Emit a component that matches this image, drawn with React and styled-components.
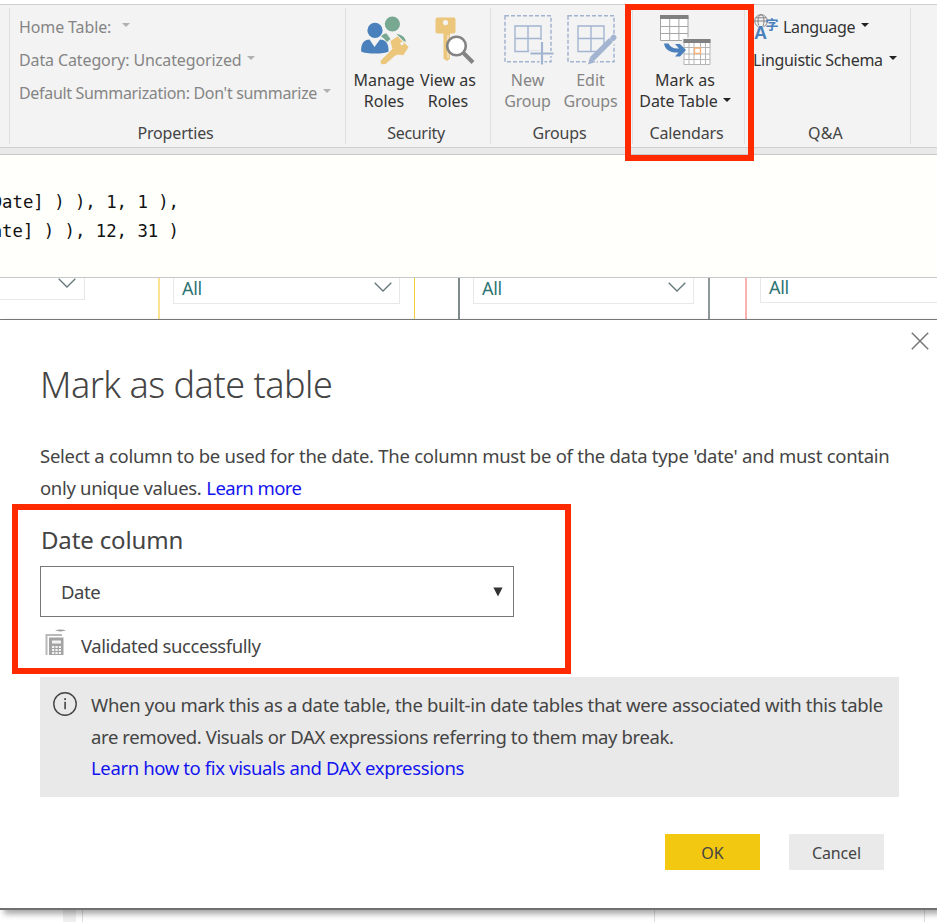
import React from 'react'
import styled, { createGlobalStyle } from 'styled-components'

const RED = "#ff2a00"
const LINE = "#d0d0d0"
const TEXT = "#444444"

const App = () => {
    return (
        <Page>
            <GlobalStyle />
            <Ribbon>
                <Group $width={336}>
                    <Options $muted>
                        <Option><Fit $track={-0.12}>Home Table:</Fit><Caret $gap={11} /></Option>
                        <Option><Fit $track={-0.12}>Data Category: Uncategorized</Fit><Caret $gap={5} /></Option>
                        <Option><Fit $track={-0.32}>Default Summarization: Don't summarize</Fit><Caret $gap={6} /></Option>
                    </Options>
                    <GroupLabel><Fit $track={-0.15}>Properties</Fit></GroupLabel>
                </Group>
                <Group $width={145}>
                    <Tools $indent={6}>
                        <Tool $width={64}>
                            <ManageRolesIcon />
                            <Fit>Manage</Fit>
                            <Fit>Roles</Fit>
                        </Tool>
                        <Tool $width={64}>
                            <ViewAsIcon />
                            <Fit>View as</Fit>
                            <Fit>Roles</Fit>
                        </Tool>
                    </Tools>
                    <GroupLabel><Fit $track={-0.3}>Security</Fit></GroupLabel>
                </Group>
                <Group $width={142}>
                    <Tools $indent={5}>
                        <Tool $width={63} $muted>
                            <NewGroupIcon />
                            <Fit>New</Fit>
                            <Fit $track={-0.15}>Group</Fit>
                        </Tool>
                        <Tool $width={63} $muted>
                            <EditGroupsIcon />
                            <Fit>Edit</Fit>
                            <Fit $track={-0.15}>Groups</Fit>
                        </Tool>
                    </Tools>
                    <GroupLabel><Fit $track={-0.15}>Groups</Fit></GroupLabel>
                </Group>
                <Group $width={112}>
                    <Tools $indent={4}>
                        <Tool $width={96}>
                            <DateTableIcon />
                            <Fit $track={0.1}>Mark as</Fit>
                            <ToolLine><Fit $track={-0.08}>Date Table</Fit><Caret $dark $gap={5} /></ToolLine>
                        </Tool>
                    </Tools>
                    <GroupLabel><Fit $track={-0.15}>Calendars</Fit></GroupLabel>
                </Group>
                <Group $width={167}>
                    <Options $tight>
                        <Option><LanguageIcon /><Fit $track={-0.33}>Language</Fit><Caret $dark $gap={6} /></Option>
                        <Option><Fit $track={-0.31}>Linguistic Schema</Fit><Caret $dark $gap={6} /></Option>
                    </Options>
                    <GroupLabel><Fit $track={0.2}>Q&amp;A</Fit></GroupLabel>
                </Group>
            </Ribbon>
            <RibbonEdge />
            <Formula>
                <CodeLine>Date] ) ), 1, 1 ),</CodeLine>
                <CodeLine>Date] ) ), 12, 31 )</CodeLine>
            </Formula>
            <Slicers>
                <Slicer $width={85} $height={22}><Chevron $raised /></Slicer>
                <SlicerCard $width={257} $left="#fbe391" $right="#f2ce3e" $gap={73}>
                    <Slicer $width={227} $height={26} $boxed><Fit $track={-0.3}>All</Fit><Chevron /></Slicer>
                </SlicerCard>
                <SlicerCard $width={252} $left="#7f8a8c" $right="#8e979a" $thick $gap={43}>
                    <Slicer $width={221} $height={26} $boxed><Fit $track={-0.3}>All</Fit><Chevron /></Slicer>
                </SlicerCard>
                <SlicerCard $width={258} $left="#fcb1b1" $gap={35}>
                    <Slicer $width={227} $height={25} $boxed $raised><Fit $track={-0.3}>All</Fit><Chevron /></Slicer>
                </SlicerCard>
            </Slicers>
            <Dialog>
                <Close viewBox="0 0 18 18"><path d="M.8.8 17.2 17.2M17.2.8.8 17.2" /></Close>
                <Title><Fit $track={-0.5}>Mark as date table</Fit></Title>
                <Paragraph>
                    <Fit $track={-0.27}>Select a column to be used for the date. The column must be of the data type 'date' and must contain</Fit><br />
                    <Fit $track={-0.32}>only unique values.</Fit> <Link><Fit $track={-0.55}>Learn more</Fit></Link>
                </Paragraph>
                <FieldLabel><Fit $track={-0.15}>Date column</Fit></FieldLabel>
                <Select><Fit $track={-0.4}>Date</Fit><SelectArrow viewBox="0 0 10 10"><path d="M.4.5h9.2L5 9.6Z" /></SelectArrow></Select>
                <Status><TableIcon /><Fit $track={-0.42}>Validated successfully</Fit></Status>
                <Info>
                    <InfoIcon />
                    <div>
                        <Fit $track={-0.31}>When you mark this as a date table, the built-in date tables that were associated with this table</Fit><br />
                        <Fit $track={-0.38}>are removed. Visuals or DAX expressions referring to them may break.</Fit><br />
                        <Link><Fit $track={-0.37}>Learn how to fix visuals and DAX expressions</Fit></Link>
                    </div>
                </Info>
                <Actions>
                    <Button $primary><Fit>OK</Fit></Button>
                    <Button><Fit $track={-0.15}>Cancel</Fit></Button>
                </Actions>
            </Dialog>
            <Canvas><Scrollbar /><Pane $width={572} /><Pane $width={270} /><Pane $width={13} /></Canvas>
            <RibbonMark />
            <FieldMark />
        </Page>
    )
}

export default App

const ManageRolesIcon = () => (
    <ToolIcon viewBox="0 0 50 50">
        <circle cx="33.4" cy="9" r="7.6" fill="#79a892" />
        <path d="M22 21.5c2-2.500 4-3 5.500-3l4 5.500-3.500 3c-2-2-3-4-6-5.500ZM37.500 19c5 .5 9 3 9.500 8l-3-1.500Z" fill="#79a892" />
        <circle cx="16" cy="15.400" r="7.600" fill="#4a80bb" />
        <path d="M2.200 36.500c-.6-8 3-12 8.300-12l5 7.500 5.500-7.500c5.500 0 9 4 8.500 12-3 2.500-22 3-27.300 0Z" fill="#4a80bb" />
        <path d="m31 26 7.500-5L50 32l-5.500 8.500-6-.5-3 1.500-9 8H22l-1-3.500L33 34Z" fill="#ecc67b" stroke="#f3f3f3" strokeWidth=".8" />
        <circle cx="43" cy="28.500" r="1.700" fill="#f3f3f3" />
    </ToolIcon>
)

const ViewAsIcon = () => (
    <ToolIcon viewBox="0 0 50 50">
        <path d="M14.500 2.500h16q2 0 2 2v12q0 2-2 2h-3.500v25l-3 2.500-3.500-2.500v-25h-6q-2 0-2-2v-12q0-2 2-2Z" fill="#ecc67b" />
        <path d="M25 20v23" stroke="#f3f3f3" />
        <circle cx="22.500" cy="7.600" r="2.600" fill="#f3f3f3" />
        <circle cx="33.500" cy="31" r="9.300" fill="#fff" stroke="#838383" strokeWidth="2.600" />
        <path d="m40.500 38 9.500 9.500" stroke="#838383" strokeWidth="4" />
    </ToolIcon>
)

const GroupFrame = () => (
    <>
        <path d="M2 .8h46v46H2Z" strokeDasharray="4 2" strokeWidth="1.500" />
        <path d="M12 11h26v25.500H12ZM25 11v25.500M12 23.500h26" strokeWidth="1.400" />
    </>
)

const NewGroupIcon = () => (
    <ToolIcon viewBox="0 0 50 50" fill="none" stroke="#a3b4d1">
        <GroupFrame />
        <path d="M39 25v26M26 38.500h26" stroke="#f3f3f3" strokeWidth="5" />
        <path d="M39 27v22.500M27.500 38.500h23" strokeWidth="2.200" />
    </ToolIcon>
)

const EditGroupsIcon = () => (
    <ToolIcon viewBox="0 0 50 50" fill="none" stroke="#a3b4d1">
        <GroupFrame />
        <path d="m22 50 28-28" stroke="#f3f3f3" strokeWidth="8" />
        <path d="m26 44 19-19" strokeWidth="5.500" />
        <path d="m47 23.200.7-.7" strokeWidth="5.500" strokeLinecap="round" />
        <path d="m22 49.500 2-7.500 5.500 5Z" fill="#a3b4d1" stroke="none" />
    </ToolIcon>
)

const DateTableIcon = () => (
    <ToolIcon viewBox="0 0 50 50">
        <path d="M.5 1.500h27.500v24H.5Z" fill="#fff" stroke="#a5a5a5" />
        <path d="M9.700 4v21.500M18.900 4v21.500M.5 11.500H28M.5 18.500H28" stroke="#a5a5a5" />
        <path d="M0 0h28.500v4H0Z" fill="#808080" />
        <path d="M22 22.500h30v30H22Z" fill="#f3f3f3" />
        <path d="M24 24.500h26v25H24Z" fill="#fff" />
        <path d="M24 24.500h26v25H24ZM29 28v21.500M34 28v21.500M40.500 28v21.500M45.500 28v21.500M24 32.500h26M24 39h26M24 44.500h26" fill="none" stroke="#b5b5b5" />
        <path d="M23.500 24h27v4h-27Z" fill="#808080" />
        <path d="M34.500 33h6v5.500h-6Z" fill="#fff" stroke="#f5b27a" strokeWidth="1.400" />
        <path d="M4 28.500h4.500c2 4 5.500 5.500 10.500 5l-4-4.500h5l6 6-6 6.500h-5l3.500-4C10.500 38 5 35 4 28.500Z" fill="#4a80bb" />
    </ToolIcon>
)

const LanguageIcon = () => (
    <LanguageSvg viewBox="0 0 26 26">
        <g fill="none" stroke="#828282">
            <circle cx="8" cy="7" r="6.300" />
            <ellipse cx="8" cy="7" rx="3" ry="6.300" />
            <path d="M1.700 7h12.600M2.700 3.800h10.600" />
        </g>
        <text x="1" y="24.500" fontFamily="Liberation Sans" fontWeight="700" fontSize="18" fill="#4a80bb" stroke="#f3f3f3" strokeWidth="1.200" paintOrder="stroke">A</text>
        <text x="12.500" y="15" fontFamily="Noto Sans CJK SC" fontWeight="700" fontSize="13" fill="#4a80bb">字</text>
    </LanguageSvg>
)

const Chevron = ({ $raised }) => (
    <ChevronSvg viewBox="0 0 18 10" $raised={$raised}><path d="m.7.700 8.300 8.300L17.300.700" /></ChevronSvg>
)

const TableIcon = () => (
    <StatusSvg viewBox="0 0 24 28">
        <path d="M10 1.500q5.500-2 11 0l-5.500 1Z" fill="#9a9a9a" />
        <path d="M1.500 26V6H17" fill="none" stroke="#b9b9b9" strokeWidth="2" />
        <path d="M4 8.500h14.500V26H4Z" fill="#a3a3a3" />
        <path d="M7 11.500h9v3H7ZM7 17h2.300v2H7ZM10.400 17h2.300v2h-2.300ZM13.800 17H16v2h-2.200ZM7 20h2.300v2H7ZM10.400 20h2.300v2h-2.300ZM13.800 20H16v2h-2.200ZM7 23h2.300v2H7ZM10.400 23h2.300v2h-2.300ZM13.800 23H16v2h-2.200Z" fill="#f3f3f3" />
    </StatusSvg>
)

const InfoIcon = () => (
    <InfoSvg viewBox="0 0 24 24">
        <circle cx="12" cy="12" r="11.200" fill="none" stroke="#444" strokeWidth="1.400" />
        <path d="M11.300 9.800h1.600v7.500h-1.600ZM11.200 6.200h1.800V8h-1.800Z" fill="#444" />
    </InfoSvg>
)

const GlobalStyle = createGlobalStyle`
    *{
        box-sizing: border-box;
    }
    body{
        margin: 0;
        background-color: #fff;
    }
`

const Page = styled.div`
    position: relative;
    width: 937px;
    height: 922px;
    overflow: hidden;
    font-family: "Noto Sans", sans-serif;
    color: ${TEXT};
`

const Fit = styled.span`
    display: inline-block;
    letter-spacing: ${props => props.$track || 0}px;
    white-space: nowrap;
`

const Ribbon = styled.div`
    display: flex;
    height: 144px;
    margin-top: 4px;
    padding: 3px 0 3px 9px;
    border-top: 1px solid ${LINE};
    border-bottom: 1px solid ${LINE};
    background-color: #f3f3f3;
    font-size: 16px;
`
const Group = styled.div`
    display: flex;
    flex-direction: column;
    flex: none;
    width: ${props => props.$width}px;
    border-left: 1px solid #e0e0e0;

    &:last-child{
        border-right: 1px solid #e0e0e0;
    }
`
const GroupLabel = styled.div`
    margin-top: auto;
    padding-right: 4px;
    text-align: center;
    line-height: 21px;
    color: #444;
`
const Options = styled.div`
    padding: 2px 0 0 ${props => props.$tight ? 8 : 9}px;
    color: ${props => props.$muted ? "#858585" : "#333"};
`
const Option = styled.div`
    display: flex;
    align-items: center;
    height: 33px;
`
const Caret = styled.span`
    width: 0;
    height: 0;
    margin: 0 0 3px ${props => props.$gap}px;
    border: 4px solid transparent;
    border-top-color: ${props => props.$dark ? "#222" : "#b0b0b0"};
    border-bottom-width: 0;
`
const Tools = styled.div`
    display: flex;
    padding: 7px 0 0 ${props => props.$indent}px;
`
const Tool = styled.div`
    display: flex;
    flex-direction: column;
    align-items: center;
    width: ${props => props.$width}px;
    line-height: 21px;
    color: ${props => props.$muted ? "#858585" : "#333"};
`
const ToolIcon = styled.svg`
    width: 50px;
    height: 50px;
    margin-bottom: 5px;
    overflow: visible;
`
const ToolLine = styled.div`
    display: flex;
    align-items: center;
`
const LanguageSvg = styled.svg`
    width: 26px;
    height: 26px;
    margin-right: 4px;
`

const RibbonEdge = styled.div`
    height: 7px;
    border-bottom: 1px solid #c8c8c8;
    background-color: #e9e9e9;
`

const Formula = styled.div`
    display: flex;
    flex-direction: column;
    align-items: flex-end;
    width: 937px;
    height: 123px;
    padding: 33px 758px 0 0;
    border-bottom: 1px solid #c8c8c8;
    background-color: #fffffc;
`
const CodeLine = styled.div`
    font-family: "DejaVu Sans Mono", monospace;
    font-size: 17.300px;
    line-height: 29px;
    white-space: pre;
    color: #111;
`

const Slicers = styled.div`
    display: flex;
    height: 41px;
`
const SlicerCard = styled.div`
    flex: none;
    width: ${props => props.$width}px;
    margin-left: ${props => props.$gap}px;
    padding-left: 13px;
    border-left: 2px solid ${props => props.$left};
    border-right: ${props => props.$right ? `${props.$thick ? 2 : 1}px solid ${props.$right}` : "none"};
`
const Slicer = styled.div`
    display: flex;
    flex: none;
    justify-content: space-between;
    width: ${props => props.$width}px;
    height: ${props => props.$height}px;
    padding-left: 8px;
    padding-right: ${props => props.$boxed ? 7 : 8}px;
    border: 1px solid #e8e8e8;
    border-top: 0;
    border-left-width: ${props => props.$boxed ? 1 : 0}px;
    font-size: 18px;
    line-height: ${props => props.$raised ? 19 : 21}px;
    color: #2c7474;
`
const ChevronSvg = styled.svg`
    width: 18px;
    height: 10px;
    margin-top: ${props => props.$raised ? 0 : 4}px;
    margin-left: auto;

    path{
        fill: none;
        stroke: #64787c;
        stroke-width: 1.300;
    }
`

const Dialog = styled.div`
    position: relative;
    z-index: 1;
    height: 591px;
    padding: 41px 38px 0 40px;
    border-top: 1px solid #777;
    border-bottom: 2px solid #707070;
    background-color: #fff;
    box-shadow: 4px 4px 6px rgba(0, 0, 0, 0.35);
`
const Close = styled.svg`
    position: absolute;
    top: 12px;
    right: 8px;
    width: 18px;
    height: 18px;
    stroke: #777;
    stroke-width: 1.500;
`
const Title = styled.div`
    font-size: 36px;
    font-weight: 300;
    line-height: 48px;
`
const Paragraph = styled.div`
    margin-top: 31px;
    font-size: 18.500px;
    line-height: 31.500px;
`
const Link = styled.span`
    color: #1414f0;
`
const FieldLabel = styled.div`
    margin-top: 21px;
    padding-left: 1px;
    font-size: 24px;
    line-height: 32px;
`
const Select = styled.div`
    display: flex;
    align-items: center;
    justify-content: space-between;
    width: 474px;
    height: 51px;
    margin-top: 10px;
    padding: 0 10px 0 20px;
    border: 1px solid #777;
    font-size: 18.500px;
`
const SelectArrow = styled.svg`
    width: 10px;
    height: 10px;
    fill: #333;
`
const Status = styled.div`
    display: flex;
    align-items: center;
    height: 56px;
    padding-left: 5px;
    font-size: 18.500px;
`
const StatusSvg = styled.svg`
    width: 24px;
    height: 28px;
    margin: 0 12px 4px 0;
`
const Info = styled.div`
    display: flex;
    height: 120px;
    margin-top: 4px;
    padding: 12px 13px 0;
    background-color: #e9e9e9;
    font-size: 18.500px;
    line-height: 31.500px;
`
const InfoSvg = styled.svg`
    flex: none;
    width: 24px;
    height: 24px;
    margin: 3px 14px 0 0;
`
const Actions = styled.div`
    display: flex;
    justify-content: flex-end;
    gap: 29px;
    margin-top: 37px;
    padding-right: 15px;
`
const Button = styled.div`
    display: flex;
    align-items: center;
    justify-content: center;
    width: 95px;
    height: 36px;
    padding-top: 2px;
    background-color: ${props => props.$primary ? "#f2c811" : "#eaeaea"};
    font-size: 16px;
`

const Canvas = styled.div`
    display: flex;
    height: 14px;
    padding-left: 63px;
`
const Scrollbar = styled.div`
    width: 13px;
    margin-right: 6px;
    background-color: #efefef;
`
const Pane = styled.div`
    flex: none;
    width: ${props => props.$width}px;
    border-left: 1px solid #ddd;
`

// hand drawn call-outs lying over the screens
const Mark = styled.div`
    position: absolute;
    z-index: 2;
    border: 6px solid ${RED};
`
const RibbonMark = styled(Mark)`
    left: 625px;
    top: 4px;
    width: 129px;
    height: 157px;
`
const FieldMark = styled(Mark)`
    left: 12px;
    top: 504px;
    width: 559px;
    height: 170px;
`
